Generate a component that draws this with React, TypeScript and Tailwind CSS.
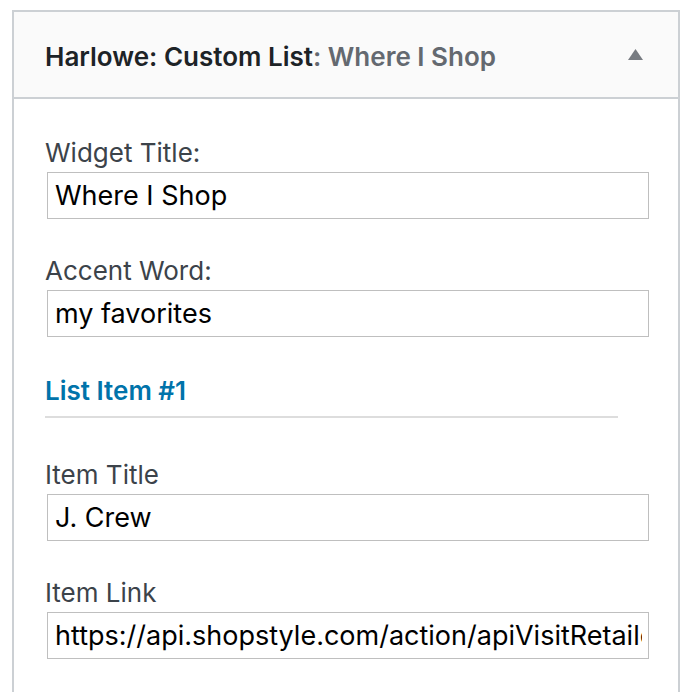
import React from 'react';

const FONT = { fontFamily: 'Inter, "Noto Sans", sans-serif' };

function Field({ label, value }: { label: string; value: string }) {
  return (
    <div className="mt-[37px] first:mt-0">
      <label className="block h-[30px] text-[26px] leading-[30px] text-[#3c434a]">{label}</label>
      <div className="ml-[2px] mt-[4px] flex h-[47px] w-[602px] items-center border border-[#bfbfbf] bg-white pl-[7px] pr-[6px]">
        <span className="block overflow-hidden whitespace-nowrap pt-[2px] text-[27px] text-black">{value}</span>
      </div>
    </div>
  );
}

export default function App() {
  return (
    <div className="min-h-screen bg-white pl-[12px] pt-[10px]" style={FONT}>
      <div className="w-[668px] border-2 border-[#ccd0d4]">
        <div className="flex h-[87px] items-center justify-between border-b-2 border-[#ccd0d4] bg-[#fafafa] pl-[31px] pr-[35px]">
          <h3 className="pt-[3px] text-[26px] font-semibold text-[#1d2327]">
            Harlowe: Custom List<span className="text-[#646970]">: Where I Shop</span>
          </h3>
          <svg width="15" height="11" viewBox="0 0 15 11" className="fill-[#787c82]">
            <polygon points="7.5,0 15,11 0,11" />
          </svg>
        </div>

        <div className="pb-[60px] pl-[31px] pt-[39px]">
          <Field label="Widget Title:" value="Where I Shop" />
          <Field label="Accent Word:" value="my favorites" />

          <div className="mt-[37px] w-[573px] border-b-2 border-[#dddddd] pb-[10px]">
            <h4 className="pt-[2px] text-[26px] font-semibold leading-[30px] text-[#0073aa]">List Item #1</h4>
          </div>

          <div className="mt-[42px]">
            <Field label="Item Title" value="J. Crew" />
            <Field label="Item Link" value="https://api.shopstyle.com/action/apiVisitRetailer?id=123456" />
          </div>
        </div>
      </div>
    </div>
  );
}
